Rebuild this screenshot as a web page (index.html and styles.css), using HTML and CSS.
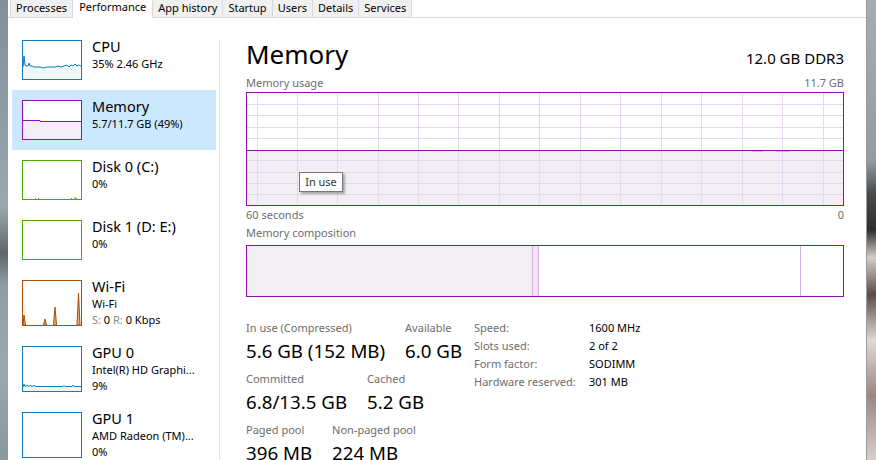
FILE: index.html
```html
<!DOCTYPE html>
<html>
<head>
<meta charset="utf-8">
<link rel="stylesheet" href="styles.css">
</head>
<body>
<div class="desk">
  <div class="wall wall-left"></div>
  <div class="window">
    <div class="tabs">
      <div class="tab">Processes</div>
      <div class="tab active">Performance</div>
      <div class="tab">App history</div>
      <div class="tab">Startup</div>
      <div class="tab">Users</div>
      <div class="tab">Details</div>
      <div class="tab">Services</div>
    </div>
    <div class="content">
      <div class="sidebar">
        <div class="item">
          <div class="spark c-blue">
            <svg width="58" height="38" viewBox="0 0 58 38">
              <path d="M0,26 L1,15 L2,24 L3,25 L5,25 L6,22 L7,25 L9,25 L11,26 L14,26 L17,26 L20,27 L24,26 L28,26 L32,26 L35,25 L38,26 L41,25 L44,24 L46,26 L48,24 L50,25 L52,23 L54,25 L56,24 L58,25 L58,38 L0,38 Z" fill="#f1f6fa"/>
              <path d="M0,26 L1,15 L2,24 L3,25 L5,25 L6,22 L7,25 L9,25 L11,26 L14,26 L17,26 L20,27 L24,26 L28,26 L32,26 L35,25 L38,26 L41,25 L44,24 L46,26 L48,24 L50,25 L52,23 L54,25 L56,24 L58,25" fill="none" stroke="#117dbb" stroke-width="1"/>
            </svg>
          </div>
          <div class="meta">
            <div class="name">CPU</div>
            <div class="sub">35% 2.46 GHz</div>
          </div>
        </div>
        <div class="item on">
          <div class="spark c-purple">
            <svg width="58" height="38" viewBox="0 0 58 38">
              <path d="M0,19.5 H17 V20.5 H58 V38 H0 Z" fill="#f1eef4"/>
              <path d="M0,19.5 H17 V20.5 H58" fill="none" stroke="#8b12ae" stroke-width="1"/>
            </svg>
          </div>
          <div class="meta">
            <div class="name">Memory</div>
            <div class="sub">5.7/11.7 GB (49%)</div>
          </div>
        </div>
        <div class="item">
          <div class="spark c-green">
            <svg width="58" height="38" viewBox="0 0 58 38">
              <path d="M12,37.5 h1 M15,37.5 h1 M48,37.5 h1 M52,36 v2 M53,37.5 h1" fill="none" stroke="#4da60c" stroke-width="1"/>
            </svg>
          </div>
          <div class="meta">
            <div class="name">Disk 0 (C:)</div>
            <div class="sub">0%</div>
          </div>
        </div>
        <div class="item">
          <div class="spark c-green"></div>
          <div class="meta">
            <div class="name">Disk 1 (D: E:)</div>
            <div class="sub">0%</div>
          </div>
        </div>
        <div class="item tall">
          <div class="spark c-orange">
            <svg width="58" height="44" viewBox="0 0 58 44">
              <path d="M0,44 L1,34 L2.5,44 Z M20.5,44 L22,38 L23.5,44 Z M30.5,44 L32,26 L33.5,44 Z M54,44 L55.5,12 L57,44 Z" fill="#e6ae86" stroke="#a74f01" stroke-width="1"/>
            </svg>
          </div>
          <div class="meta">
            <div class="name">Wi-Fi</div>
            <div class="sub">Wi-Fi</div>
            <div class="sub">
              <span class="dim">S:</span> 0 <span class="dim">R:</span> 0 Kbps
            </div>
          </div>
        </div>
        <div class="item tall">
          <div class="spark c-blue">
            <svg width="58" height="44" viewBox="0 0 58 44">
              <path d="M0,40 L1,37 L2,39.5 L4,38 L5,39.5 L7,38.5 L9,39.5 L11,38.5 L13,39.5 L40,39.5 L41,38.5 L42,39.5 L49,39.5 L50,38 L51,39.5 L58,39.5 L58,44 L0,44 Z" fill="#f1f6fa"/>
              <path d="M0,40 L1,37 L2,39.5 L4,38 L5,39.5 L7,38.5 L9,39.5 L11,38.5 L13,39.5 L40,39.5 L41,38.5 L42,39.5 L49,39.5 L50,38 L51,39.5 L58,39.5" fill="none" stroke="#117dbb" stroke-width="1"/>
            </svg>
          </div>
          <div class="meta">
            <div class="name">GPU 0</div>
            <div class="sub">Intel(R) HD Graphi...</div>
            <div class="sub">9%</div>
          </div>
        </div>
        <div class="item tall">
          <div class="spark c-blue"></div>
          <div class="meta">
            <div class="name">GPU 1</div>
            <div class="sub">AMD Radeon (TM)...</div>
            <div class="sub">0%</div>
          </div>
        </div>
      </div>
      <div class="divider"></div>
      <div class="main">
        <div class="head">
          <h1 class="title">Memory</h1>
          <div class="spec">12.0 GB DDR3</div>
        </div>
        <div class="axis top"><span>Memory usage</span><span>11.7 GB</span></div>
        <div class="chart">
          <svg width="596" height="112" viewBox="0 0 596 112" shape-rendering="crispEdges">
            <rect x="0" y="58" width="596" height="54" fill="#f1eef4"/>
            <g stroke="#e8d5ef" stroke-width="1">
              <path d="M10.5,0 V112 M50.5,0 V112 M90.5,0 V112 M131.5,0 V112 M171.5,0 V112 M211.5,0 V112 M252.5,0 V112 M292.5,0 V112 M333.5,0 V112 M373.5,0 V112 M414.5,0 V112 M454.5,0 V112 M495.5,0 V112 M535.5,0 V112 M576.5,0 V112"/>
              <path d="M0,11.5 H596 M0,22.5 H596 M0,34.5 H596 M0,45.5 H596 M0,67.5 H596 M0,79.5 H596 M0,90.5 H596 M0,101.5 H596"/>
            </g>
            <path d="M0,57.5 H596" stroke="#8b12ae" stroke-width="1"/>
            <path d="M505,58.5 H516 M529,58.5 H543" stroke="#d9b3e6" stroke-width="1"/>
          </svg>
          <div class="tip">In use</div>
        </div>
        <div class="axis under"><span>60 seconds</span><span>0</span></div>
        <div class="axis comp-label"><span>Memory composition</span></div>
        <div class="comp">
          <div class="seg inuse"></div>
          <div class="seg modified"></div>
          <div class="seg standby"></div>
          <div class="seg free"></div>
        </div>
        <div class="stats">
          <div class="left">
            <div class="srow">
              <div class="stat"><div class="lab">In use (Compressed)</div><div class="val">5.6 GB (152 MB)</div></div>
              <div class="stat"><div class="lab">Available</div><div class="val">6.0 GB</div></div>
            </div>
            <div class="srow">
              <div class="stat"><div class="lab">Committed</div><div class="val">6.8/13.5 GB</div></div>
              <div class="stat"><div class="lab">Cached</div><div class="val">5.2 GB</div></div>
            </div>
            <div class="srow">
              <div class="stat"><div class="lab">Paged pool</div><div class="val">396 MB</div></div>
              <div class="stat"><div class="lab">Non-paged pool</div><div class="val">224 MB</div></div>
            </div>
          </div>
          <div class="info">
            <div class="k">Speed:</div><div class="v">1600 MHz</div>
            <div class="k">Slots used:</div><div class="v">2 of 2</div>
            <div class="k">Form factor:</div><div class="v">SODIMM</div>
            <div class="k">Hardware reserved:</div><div class="v">301 MB</div>
          </div>
        </div>
      </div>
    </div>
  </div>
  <div class="wall wall-right"></div>
</div>
</body>
</html>
```

FILE: styles.css
```css
* { box-sizing: border-box; }
html, body { margin: 0; padding: 0; }
body {
  width: 876px;
  height: 460px;
  overflow: hidden;
  font-family: "Noto Sans", "DejaVu Sans", sans-serif;
  color: #000;
  background: #8d9ca4;
}
.desk { display: flex; height: 460px; }
.wall-left {
  width: 8px;
  flex: none;
  background: linear-gradient(#7f919b 0%, #8fa0a9 30%, #9aa8af 45%, #5d666b 55%, #8e9ea7 62%, #9aa9b1 80%, #8798a1 100%);
}
.wall-right {
  width: 9px;
  flex: none;
  background: linear-gradient(#a3adb2 0%, #929da3 35%, #4a4b4d 42%, #2f2d2e 50%, #d8cec6 56%, #5b4c48 64%, #e2d9d2 74%, #9a8881 86%, #d9cfc8 100%);
}
.window {
  flex: 1;
  min-width: 0;
  background: #fff;
  border-right: 1px solid #9a9a9a;
  display: flex;
  flex-direction: column;
}

/* tabs */
.tabs {
  display: flex;
  align-items: flex-start;
  height: 18px;
  padding-left: 2px;
  border-bottom: 1px solid #d9d9d9;
  flex: none;
}
.tab {
  height: 17px;
  padding: 0 5px;
  border-left: 1px solid #d9d9d9;
  border-right: 1px solid #d9d9d9;
  margin-left: -1px;
  background: #f0f0f0;
  font-size: 11px;
  line-height: 15px;
  white-space: nowrap;
}
.tab:first-child { margin-left: 0; }
.tab.active {
  height: 18px;
  margin-bottom: -1px;
  background: #fff;
  position: relative;
  padding: 0 6px;
  line-height: 13px;
}

/* layout */
.content { display: flex; flex: 1; min-height: 0; }
.sidebar {
  width: 211px;
  flex: none;
  padding: 12px 0 0 4px;
}
.divider {
  width: 1px;
  flex: none;
  margin-top: 22px;
  background: #e3e3e3;
}
.main {
  flex: 1;
  min-width: 0;
  padding: 19px 22px 0 26px;
}

/* sidebar items */
.item {
  display: flex;
  align-items: flex-start;
  gap: 10px;
  width: 204px;
  padding: 10px 0 10px 10px;
}
.item.on { background: #cce8ff; }
.spark {
  width: 60px;
  height: 40px;
  flex: none;
  border: 1px solid;
  background: #fff;
}
.item.tall .spark { height: 46px; }
.spark svg { display: block; }
.c-blue { border-color: #117dbb; }
.c-purple { border-color: #8b12ae; }
.c-green { border-color: #4da60c; }
.c-orange { border-color: #a74f01; }
.meta { margin: -3px 0 -8px; min-width: 0; }
.name { font-size: 14.5px; line-height: 19px; white-space: nowrap; }
.sub { font-size: 11px; line-height: 16px; white-space: nowrap; }
.dim { color: #8a8a8a; }

/* main */
.head {
  display: flex;
  justify-content: space-between;
  align-items: baseline;
}
.title {
  margin: 0;
  font-size: 26px;
  line-height: 34px;
  font-weight: 400;
}
.spec { font-size: 15px; }
.axis {
  display: flex;
  justify-content: space-between;
  font-size: 11px;
  line-height: 14px;
  color: #6d6d6d;
}
.axis.top { margin-top: 5px; }
.axis.under { margin-top: 2px; }
.axis.comp-label { margin-top: 4px; }
.chart {
  position: relative;
  margin-top: 2px;
  height: 114px;
  border: 1px solid #8b12ae;
}
.chart svg { display: block; }
.tip {
  position: absolute;
  left: 52px;
  top: 79px;
  width: 44px;
  height: 20px;
  border: 1px solid #767676;
  background: #fff;
  box-shadow: 2px 2px 2px rgba(0, 0, 0, 0.3);
  font-size: 11px;
  line-height: 18px;
  text-align: center;
  color: #333;
}
.comp {
  display: flex;
  margin-top: 5px;
  height: 52px;
  border: 1px solid #8b12ae;
}
.seg { border-right: 1px solid #d5aee2; }
.seg.inuse { width: 286px; background: #f1eef4; }
.seg.modified { width: 6px; background: #efe5f3; }
.seg.standby { width: 262px; background: #fff; }
.seg.free { flex: 1; border-right: 0; background: #fff; }

/* stats */
.stats { display: flex; margin-top: 24px; }
.left { width: 228px; flex: none; }
.srow { display: flex; gap: 20px; }
.srow + .srow { margin-top: 9px; }
.lab {
  font-size: 11px;
  line-height: 14px;
  color: #6d6d6d;
  white-space: nowrap;
}
.val {
  font-size: 18.7px;
  line-height: 24px;
  margin-top: 4px;
  white-space: nowrap;
}
.info {
  display: grid;
  grid-template-columns: 115px auto;
  align-content: start;
  margin-top: -2px;
  font-size: 11px;
  line-height: 18px;
}
.info .k { color: #6d6d6d; }
```
